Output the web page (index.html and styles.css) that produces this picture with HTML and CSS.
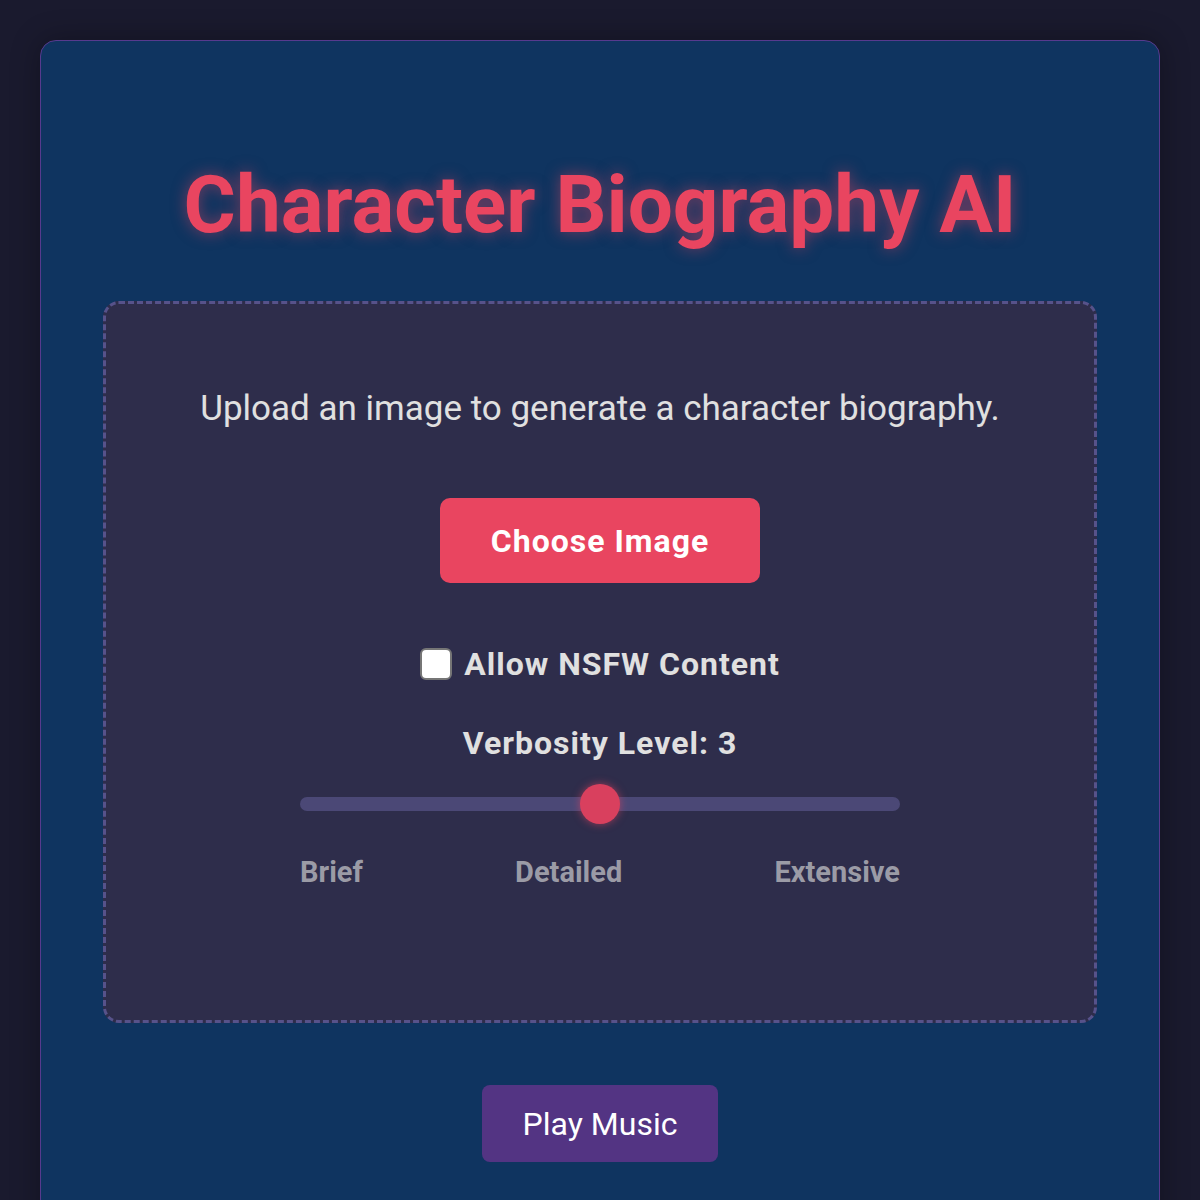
FILE: index.html
```html
<!DOCTYPE html>
<html lang="en">
<head>
    <meta charset="UTF-8">
    <meta name="viewport" content="width=device-width, initial-scale=1.0">
    <title>Character Biography AI</title>
    <link rel="stylesheet" href="styles.css">
</head>
<body>
    <div class="container">
        <h1>Character Biography AI</h1>

        <!-- Upload Section -->
        <div class="upload-section">
            <p class="upload-hint">Upload an image to generate a character biography.</p>
            <button class="choose-btn">Choose Image</button>

            <label class="nsfw-toggle">
                <input type="checkbox" id="nsfwCheck">
                <span>Allow NSFW Content</span>
            </label>

            <div class="verbosity">
                <div class="verbosity-title">Verbosity Level: <span id="verbosityValue">3</span></div>
                <input type="range" id="verbosityRange" class="verbosity-range" min="1" max="5" value="3">
                <div class="verbosity-labels">
                    <span>Brief</span>
                    <span>Detailed</span>
                    <span>Extensive</span>
                </div>
            </div>
        </div>

        <button class="music-btn">Play Music</button>
    </div>
</body>
</html>
```

FILE: styles.css
```css
* {
    margin: 0;
    padding: 0;
    box-sizing: border-box;
}
body {
    font-family: Roboto, "Liberation Sans", sans-serif;
    background-color: #1a1a2e;
    color: #e0e0e0;
    padding: 40px;
}
.container {
    background-color: #0f3460;
    border: 1px solid #573a8e;
    border-radius: 16px;
    padding: 0 62px 60px;
    min-height: 1200px;
    box-shadow: 0 0 30px rgba(0,0,0,0.3);
}
h1 {
    color: #e94560;
    font-size: 80px;
    font-weight: 700;
    text-align: center;
    padding-top: 117px;
    margin-bottom: 49px;
    text-shadow: 0 0 15px rgba(233,69,96,0.5);
}
.upload-section {
    border: 3px dashed #57528a;
    border-radius: 16px;
    background-color: #2e2d4b;
    padding: 84px 60px 131px;
    text-align: center;
}
.upload-hint {
    font-size: 35px;
    margin-bottom: 69px;
}
.choose-btn {
    background-color: #e94560;
    color: white;
    border: none;
    border-radius: 10px;
    font-family: inherit;
    font-size: 32px;
    font-weight: 700;
    letter-spacing: 1px;
    width: 320px;
    height: 85px;
    cursor: pointer;
}
.nsfw-toggle {
    display: flex;
    justify-content: center;
    align-items: center;
    gap: 12px;
    margin-top: 62px;
    font-size: 32px;
    font-weight: 700;
    letter-spacing: 1px;
}
.nsfw-toggle input {
    -webkit-appearance: none;
    appearance: none;
    width: 32px;
    height: 32px;
    background: white;
    border: 2px solid #767676;
    border-radius: 6px;
    cursor: pointer;
}
.nsfw-toggle input:checked {
    background: #e94560;
    border-color: #e94560;
}
.verbosity {
    width: 600px;
    margin: 41px auto 0;
}
.verbosity-title {
    font-size: 32px;
    font-weight: 700;
    letter-spacing: 1px;
}
.verbosity-range {
    -webkit-appearance: none;
    appearance: none;
    display: block;
    width: 100%;
    height: 14px;
    margin: 35px 0 44px;
    background: #4b4876;
    border-radius: 7px;
    outline: none;
}
.verbosity-range::-webkit-slider-thumb {
    -webkit-appearance: none;
    appearance: none;
    width: 40px;
    height: 40px;
    border-radius: 50%;
    background: #d9405e;
    box-shadow: 0 0 8px rgba(233,69,96,0.6);
    cursor: pointer;
}
.verbosity-labels {
    display: flex;
    justify-content: space-between;
    font-size: 29px;
    font-weight: 700;
    color: #9b9ba6;
}
.music-btn {
    display: block;
    margin: 62px auto 0;
    background-color: #533483;
    color: white;
    border: none;
    border-radius: 8px;
    font-family: inherit;
    font-size: 32px;
    width: 236px;
    height: 77px;
    cursor: pointer;
}
```
